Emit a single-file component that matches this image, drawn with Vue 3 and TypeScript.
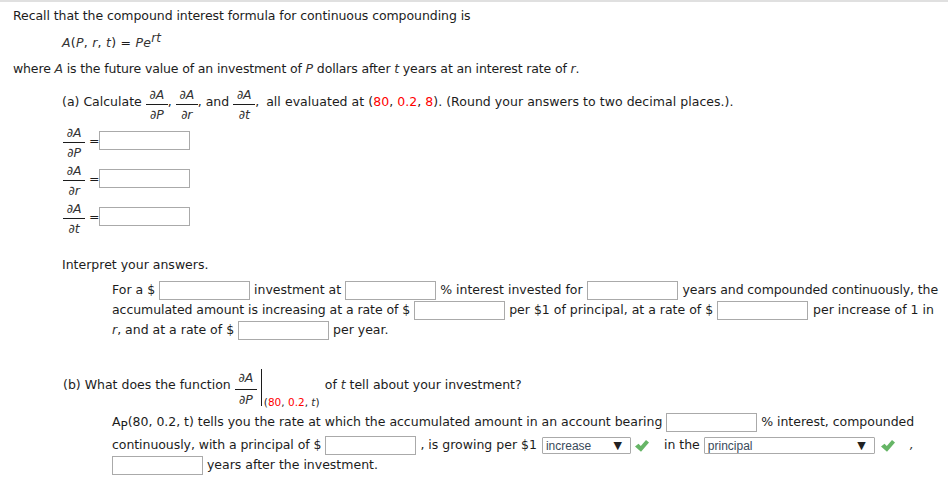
<script setup lang="ts">
// partial derivative answer rows for part (a)
const derivs = ['P', 'r', 't']
</script>

<template>
  <div class="page">
    <p class="line first">Recall that the compound interest formula for continuous compounding is</p>
    <p class="line formula"><i>A</i>(<i>P</i>, <i>r</i>, <i>t</i>) = <i>P</i><i>e</i><sup><i>rt</i></sup></p>
    <p class="line where">where <i>A</i> is the future value of an investment of <i>P</i> dollars after <i>t</i> years at an interest rate of <i>r</i>.</p>

    <div class="part-a">
      <div class="calc">
        <span>(a) Calculate&nbsp;</span>
        <span class="frac"><span class="num"><i>∂A</i></span><span class="den"><i>∂P</i></span></span><span>,&nbsp;</span>
        <span class="frac"><span class="num"><i>∂A</i></span><span class="den"><i>∂r</i></span></span><span>, and&nbsp;</span>
        <span class="frac"><span class="num"><i>∂A</i></span><span class="den"><i>∂t</i></span></span>
        <span class="rest">,<span class="all">all evaluated at (<em>80</em>, <em>0.2</em>, <em>8</em>). (Round your answers to two decimal places.).</span></span>
      </div>
      <div v-for="d in derivs" :key="d" class="answer">
        <span class="frac"><span class="num"><i>∂A</i></span><span class="den"><i>∂{{ d }}</i></span></span>
        <span class="eq">=</span>
        <span class="box"></span>
      </div>
    </div>

    <p class="interpret">Interpret your answers.</p>
    <div class="para">
      <div class="row">For a $ <span class="box"></span> investment at <span class="box"></span> % interest invested for <span class="box"></span> <span class="tighter">years and compounded continuously, the</span></div>
      <div class="row"><span class="tight">accumulated amount is increasing at a rate of $</span> <span class="box"></span> per $1 of principal, at a rate of $ <span class="box"></span> <span class="per-inc">per increase of 1 in</span></div>
      <div class="row"><i>r</i>, and at a rate of $ <span class="box"></span> per year.</div>
    </div>

    <div class="part-b">
      <span class="lead">(b) What does the function</span>
      <span class="frac"><span class="num"><i>∂A</i></span><span class="den"><i>∂P</i></span></span>
      <span class="bar"></span>
      <span class="at">(<em>80</em>, <em>0.2</em>, <i>t</i>)</span>
      <span class="tail">of <i>t</i> tell about your investment?</span>
    </div>
    <div class="para lower">
      <div class="row r1">A<sub>P</sub>(80, 0.2, t) tells you the rate at which the accumulated amount in an account bearing <span class="box"></span> % interest, compounded</div>
      <div class="row r2"><span class="tight">continuously, with a principal of $</span> <span class="box"></span> , is growing per $1<span class="select s-inc">increase<b class="arrow">▼</b></span>
        <svg class="check" viewBox="0 0 14 12"><path d="M0 6.5 L3.5 3.8 L5.8 6 L11 0 L14 2.4 L6 11.7 Z" /></svg>
        <span class="in-the">in the</span><span class="select s-pri">principal<b class="arrow">▼</b></span>
        <svg class="check c2" viewBox="0 0 14 12"><path d="M0 6.5 L3.5 3.8 L5.8 6 L11 0 L14 2.4 L6 11.7 Z" /></svg>
        <i class="comma">,</i>
      </div>
      <div class="row r3"><span class="box"></span> years after the investment.</div>
    </div>
  </div>
</template>

<style scoped>
.page {
  width: 948px;
  height: 487px;
  box-sizing: border-box;
  border-top: 2px solid #e0e0e0;
  padding-left: 13px;
  font-family: "DejaVu Sans", Verdana, sans-serif;
  font-size: 12.5px;
  line-height: 20px;
  color: #1c1c1c;
  background: #fff;
  overflow: hidden;
}
.line { margin: 0; }
.first { padding-top: 4px; letter-spacing: -0.07px; }
.formula { margin-top: 7px; padding-left: 49px; letter-spacing: 0.25px; }
.where { margin-top: 6px; letter-spacing: -0.14px; }
i { font-style: italic; color: #333; }
sup { font-size: 12px; line-height: 0; vertical-align: 5px; letter-spacing: 0; }
em { font-style: normal; color: #f00; }
.part-a { margin: 7px 0 0 49px; }
.calc { display: flex; align-items: center; height: 37px; }
.calc > span:not(.frac) { white-space: pre; padding-bottom: 5px; }
.rest { letter-spacing: 0.04px; }
.all { margin-left: 7px; }
.frac {
  display: inline-flex;
  flex-direction: column;
  align-items: stretch;
  text-align: center;
  line-height: 17px;
  min-width: 22px;
}
.num { border-bottom: 1px solid #1c1c1c; padding: 0 0 1px; }
.den { padding-top: 1px; }
.answer { display: flex; align-items: center; height: 38px; padding-left: 1px; }
.eq { margin: 0 0 3px 4px; }
.answer .box { margin-bottom: 3px; }
.box {
  display: inline-block;
  width: 89px;
  height: 17px;
  border: 1px solid #aaa;
  vertical-align: middle;
  background: #fff;
}
.interpret { margin: 18px 0 0 49px; }
.para { margin: 5px 0 0 99px; }
.row { height: 20px; white-space: nowrap; }
.tight { letter-spacing: -0.06px; }
.tighter { margin-left: 1px; letter-spacing: -0.11px; }
.per-inc { margin-left: 1px; }
.part-b { display: flex; align-items: center; margin: 29px 0 0 50px; height: 38px; white-space: pre; }
.part-b .num { padding-bottom: 3px; }
.lead { padding-bottom: 6px; margin-right: 4px; }
.bar { width: 1px; height: 37px; align-self: flex-start; background: #1c1c1c; margin-left: 4px; }
.at { font-size: 10.5px; align-self: flex-end; line-height: 14px; margin: 0 0 -2px 2px; width: 61px; }
.tail { padding-bottom: 6px; letter-spacing: -0.03px; }
.lower { margin-top: 5px; }
.r1 { height: 23px; letter-spacing: -0.02px; }
.r2 { height: 20px; }
sub { font-size: 12px; line-height: 0; vertical-align: -4px; }
.select {
  display: inline-flex;
  justify-content: space-between;
  align-items: center;
  box-sizing: border-box;
  height: 17px;
  margin-left: 5px;
  border: 1px solid #aaa;
  border-radius: 1px;
  padding: 0 8px 0 3px;
  font-family: "Liberation Sans", Arial, sans-serif;
  font-size: 12px;
  color: #3a4a5a;
  vertical-align: middle;
}
.arrow { font-family: "DejaVu Sans", sans-serif; font-size: 11px; font-weight: normal; color: #222; }
.s-inc { width: 89px; }
.s-pri { width: 171px; margin-left: 4px; }
.check { width: 14px; height: 12px; vertical-align: -3px; margin-left: 4px; }
.c2 { margin-left: 6px; }
.check path { fill: #66b566; }
.in-the { margin-left: 15px; }
.comma { margin-left: 15px; }
</style>
